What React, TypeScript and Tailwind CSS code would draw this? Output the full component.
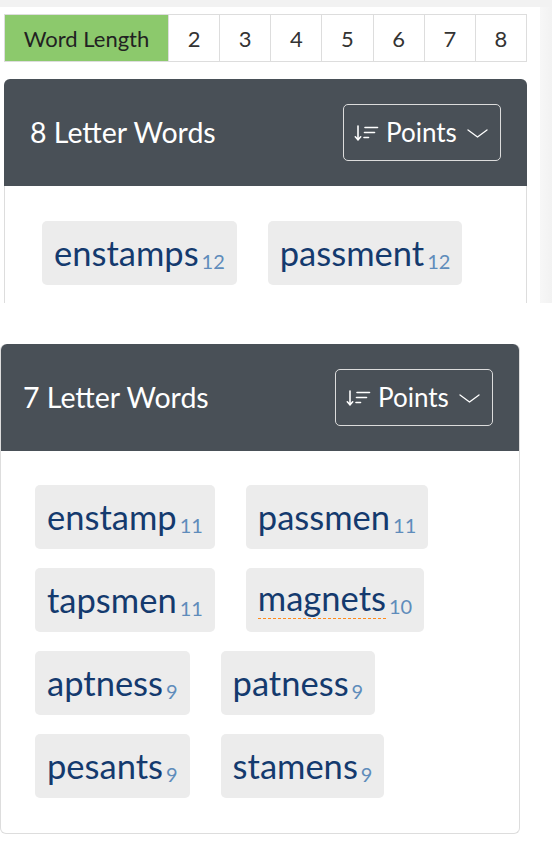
import React from "react";

const font = { fontFamily: "Lato, 'Open Sans', 'Liberation Sans', sans-serif" };

function SortIcon() {
  return (
    <svg width="25" height="18" viewBox="0 0 25 18" fill="none" stroke="#ffffff" strokeWidth="1.6" strokeLinecap="round">
      <path d="M4 2 V15.5" />
      <path d="M1.3 12.8 L4 15.8 L6.7 12.8" />
      <path d="M11 3.5 H23.5" />
      <path d="M10.5 8.5 H20.5" />
      <path d="M10 13.5 H14.5" />
    </svg>
  );
}

function Chevron() {
  return (
    <svg width="21" height="9" viewBox="0 0 21 9" fill="none" stroke="#ffffff" strokeWidth="1.3" strokeLinecap="round" strokeLinejoin="round">
      <path d="M1 1 L10.5 8 L20 1" />
    </svg>
  );
}

function Header({ title, pl }: { title: string; pl: string }) {
  return (
    <div className={"flex h-[107px] items-center justify-between rounded-t-[6px] bg-[#495057] pr-[26px] " + pl}>
      <span className="text-[28.5px] text-white">{title}</span>
      <div className="flex h-[57px] w-[158px] items-center rounded-[5px] border border-[#dcdcdc] pl-[10px]">
        <SortIcon />
        <span className="ml-[7px] text-[26px] text-white">Points</span>
        <span className="ml-[10px] mt-[2px]">
          <Chevron />
        </span>
      </div>
    </div>
  );
}

function Chip({ word, pts, underline }: { word: string; pts: number; underline?: boolean }) {
  return (
    <div className="flex h-[64px] items-center rounded-[5px] bg-[#ececec] px-[12px]">
      <span className="text-[34.5px] leading-none text-[#143a6e]">
        {underline ? (
          <span className="inline-block border-b border-dashed border-[#ff8a1a] pb-[3px] leading-none">{word}</span>
        ) : (
          <span>{word}</span>
        )}
        <span className="relative top-[3px] ml-[3px] text-[20px] text-[#5f8cbb]">{pts}</span>
      </span>
    </div>
  );
}

export default function App() {
  const tabs = ["2", "3", "4", "5", "6", "7", "8"];
  const eight = [
    { w: "enstamps", p: 12 },
    { w: "passment", p: 12 },
  ];
  const seven = [
    { w: "enstamp", p: 11 },
    { w: "passmen", p: 11 },
    { w: "tapsmen", p: 11 },
    { w: "magnets", p: 10, u: true },
    { w: "aptness", p: 9 },
    { w: "patness", p: 9 },
    { w: "pesants", p: 9 },
    { w: "stamens", p: 9 },
  ];
  return (
    <div className="w-[552px] min-h-[842px] bg-white" style={font}>
      {/* top captured region */}
      <div className="h-[303px] overflow-hidden">
        <div className="h-[7px] bg-[#f2f2f2]" />
        <div className="flex">
          <div className="ml-[4px] w-[523px]">
            <div className="mt-[7px] flex h-[48px] border border-[#dddddd]">
              <div className="flex w-[163px] items-center justify-center bg-[#8cc96c] text-[22px] text-[#222222]">
                Word Length
              </div>
              {tabs.map((t) => (
                <div
                  key={t}
                  className="flex flex-1 items-center justify-center border-l border-[#dddddd] text-[22px] text-[#333333]"
                >
                  {t}
                </div>
              ))}
            </div>
            <div className="mt-[17px]">
              <Header title="8 Letter Words" pl="pl-[26px]" />
              <div className="h-[200px] border-x border-[#dddddd] pl-[37px] pt-[35px]">
                <div className="flex flex-wrap gap-x-[31px] gap-y-[19px]">
                  {eight.map((c) => (
                    <Chip key={c.w} word={c.w} pts={c.p} />
                  ))}
                </div>
              </div>
            </div>
          </div>
          <div className="ml-[13px] h-[296px] flex-1 bg-gradient-to-r from-[#f7f7f7] to-[#f2f2f2]" />
        </div>
      </div>

      {/* second card */}
      <div className="mt-[41px] w-[520px] rounded-[6px] border border-[#dddddd] border-t-0">
        <Header title="7 Letter Words" pl="pl-[22px]" />
        <div className="px-[34px] pb-[35px] pt-[34px]">
          <div className="flex flex-wrap gap-x-[31px] gap-y-[19px]">
            {seven.slice(0, 4).map((c) => (
              <Chip key={c.w} word={c.w} pts={c.p} underline={c.u} />
            ))}
          </div>
          <div className="mt-[19px] flex flex-wrap gap-x-[31px] gap-y-[19px]">
            {seven.slice(4).map((c) => (
              <Chip key={c.w} word={c.w} pts={c.p} />
            ))}
          </div>
        </div>
      </div>
    </div>
  );
}
